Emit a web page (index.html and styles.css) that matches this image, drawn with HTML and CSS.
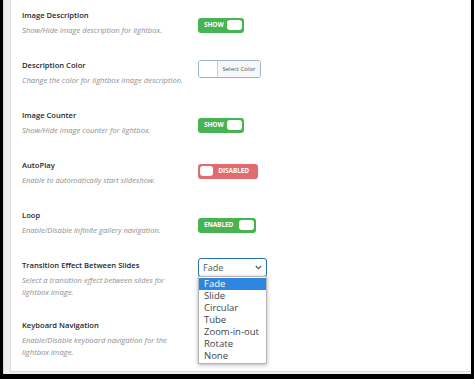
FILE: index.html
```html
<!DOCTYPE html>
<html lang="en">
<head>
<meta charset="utf-8">
<title>Lightbox settings</title>
<link rel="stylesheet" href="styles.css">
</head>
<body>
<div class="frame">
  <div class="gutter"></div>
  <div class="panel">
    <div class="row">
      <div class="info">
        <div class="title">Image Description</div>
        <div class="desc">Show/Hide image description for lightbox.</div>
      </div>
      <div class="ctrl"><span class="toggle on show"><span class="tlabel">SHOW</span><span class="knob"></span></span></div>
    </div>
    <div class="row">
      <div class="info">
        <div class="title">Description Color</div>
        <div class="desc">Change the color for lightbox image description.</div>
      </div>
      <div class="ctrl"><span class="colorbtn"><span class="swatch"></span><span class="cblabel">Select Color</span></span></div>
    </div>
    <div class="row">
      <div class="info">
        <div class="title">Image Counter</div>
        <div class="desc">Show/Hide image counter for lightbox.</div>
      </div>
      <div class="ctrl"><span class="toggle on show"><span class="tlabel">SHOW</span><span class="knob"></span></span></div>
    </div>
    <div class="row">
      <div class="info">
        <div class="title">AutoPlay</div>
        <div class="desc">Enable to automatically start slideshow.</div>
      </div>
      <div class="ctrl ctrl-flat"><span class="toggle off"><span class="knob"></span><span class="tlabel">DISABLED</span></span></div>
    </div>
    <div class="row">
      <div class="info">
        <div class="title">Loop</div>
        <div class="desc">Enable/Disable infinite gallery navigation.</div>
      </div>
      <div class="ctrl"><span class="toggle on enabled"><span class="tlabel">ENABLED</span><span class="knob"></span></span></div>
    </div>
    <div class="row">
      <div class="info">
        <div class="title">Transition Effect Between Slides</div>
        <div class="desc">Select a transition effect between slides for lightbox image.</div>
      </div>
      <div class="ctrl ctrl-select">
        <div class="select">
          <span class="sval">Fade</span>
          <svg class="chev" width="7" height="5" viewBox="0 0 7 5"><path d="M0.8 1 L3.5 3.7 L6.2 1" fill="none" stroke="#50575e" stroke-width="1.1"/></svg>
        </div>
        <ul class="options">
          <li class="opt sel">Fade</li>
          <li class="opt">Slide</li>
          <li class="opt">Circular</li>
          <li class="opt">Tube</li>
          <li class="opt">Zoom-in-out</li>
          <li class="opt">Rotate</li>
          <li class="opt">None</li>
        </ul>
      </div>
    </div>
    <div class="row row-tight">
      <div class="info">
        <div class="title">Keyboard Navigation</div>
        <div class="desc">Enable/Disable keyboard navigation for the lightbox image.</div>
      </div>
      <div class="ctrl"></div>
    </div>
  </div>
</div>
</body>
</html>
```
FILE: styles.css
```css
html, body {
  margin: 0;
  padding: 0;
  background: #000;
  overflow: hidden;
}
.frame {
  margin-left: 3px;
  width: 468px;
  height: 374px;
  background: #f0f0f1;
  display: flex;
}
.gutter {
  width: 6px;
  border-left: 1px solid #d5d5d5;
}
.panel {
  flex: 1;
  height: 372px;
  background: #fff;
  border-left: 1px solid #dcdcde;
  border-bottom: 1px solid #dcdcde;
  padding: 9px 0 0 11px;
  box-sizing: border-box;
  display: flex;
  flex-direction: column;
  gap: 23px;
  font-family: "Open Sans", "Noto Sans", sans-serif;
}
.row {
  display: grid;
  grid-template-columns: 168px 1fr;
  column-gap: 8px;
}
.row-tight {
  margin-top: -2px;
}
.title {
  font-size: 7.6px;
  font-weight: 600;
  line-height: 12px;
  color: #23282d;
  white-space: nowrap;
}
.desc {
  margin-top: 3px;
  font-size: 7.6px;
  font-style: italic;
  line-height: 12px;
  color: #8c8f94;
}
.ctrl {
  padding-top: 1px;
  position: relative;
}
.ctrl-flat {
  padding-top: 0;
}
.ctrl-select {
  padding-top: 0;
  margin-top: -1px;
}
.toggle {
  display: inline-flex;
  align-items: center;
  justify-content: space-between;
  height: 15px;
  border-radius: 3px;
  box-sizing: border-box;
  padding: 0 2px;
}
.toggle.on {
  background: #46b450;
}
.toggle.off {
  background: #e06c6e;
}
.toggle.show {
  width: 46px;
  padding-left: 6px;
}
.toggle.enabled {
  width: 58px;
  padding-left: 6px;
}
.toggle.off {
  width: 60px;
  padding-right: 9px;
}
.tlabel {
  font-size: 6.5px;
  font-weight: 700;
  color: #fff;
  line-height: 1;
  letter-spacing: -0.1px;
}
.knob {
  width: 15px;
  height: 10px;
  background: #fff;
  border-radius: 3px;
}
.toggle.off .knob {
  width: 13px;
}
.colorbtn {
  display: inline-flex;
  width: 63px;
  height: 18px;
  border: 1px solid #9fb2c8;
  border-radius: 3px;
  box-sizing: border-box;
  overflow: hidden;
}
.swatch {
  width: 18px;
  background: #fff;
  border-right: 1px solid #c9d1da;
}
.cblabel {
  flex: 1;
  background: #f6f7f7;
  font-size: 6px;
  line-height: 16px;
  color: #50575e;
  text-align: center;
  white-space: nowrap;
}
.select {
  width: 69px;
  height: 19px;
  border: 1px solid #2271b1;
  border-radius: 3px;
  box-sizing: border-box;
  display: flex;
  align-items: center;
  justify-content: space-between;
  padding: 0 4px 0 4px;
  background: #fff;
}
.sval {
  font-size: 9px;
  color: #50575e;
}
.options {
  position: absolute;
  left: 0;
  top: 18px;
  width: 69px;
  margin: 0;
  padding: 1px 0;
  list-style: none;
  background: #fff;
  border: 1px solid #b5b5b5;
  box-sizing: border-box;
  box-shadow: 0 1px 4px rgba(0, 0, 0, 0.3);
}
.opt {
  height: 12px;
  line-height: 12px;
  font-size: 9.5px;
  color: #3c434a;
  padding-left: 5px;
}
.opt.sel {
  background: #2f86e0;
  color: #fff;
}
```
